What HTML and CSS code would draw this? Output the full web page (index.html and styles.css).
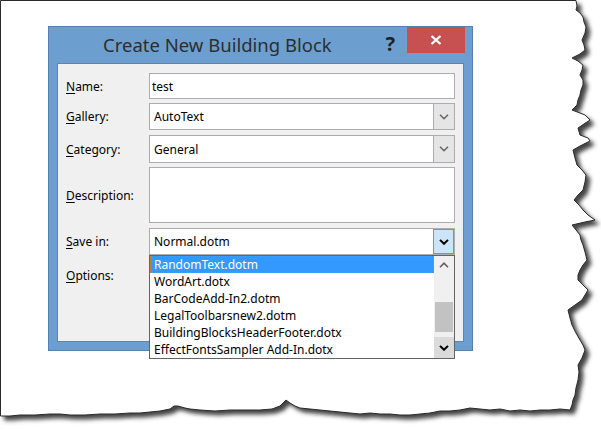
FILE: index.html
```html
<!DOCTYPE html>
<html>
<head>
<meta charset="utf-8">
<title>Create New Building Block</title>
<link rel="stylesheet" href="styles.css">
</head>
<body>
<div class="page">
  <svg class="paper" width="601" height="430" viewBox="0 0 601 430" aria-hidden="true">
    <defs>
      <filter id="tornShadow" x="-5%" y="-5%" width="115%" height="115%">
        <feGaussianBlur in="SourceAlpha" stdDeviation="2"/>
        <feOffset dx="4" dy="4" result="blur"/>
        <feFlood flood-color="#444444"/>
        <feComposite in2="blur" operator="in"/>
        <feMerge><feMergeNode/><feMergeNode in="SourceGraphic"/></feMerge>
      </filter>
    </defs>
    <path filter="url(#tornShadow)" fill="#ffffff" stroke="#2a2a2a" stroke-width="1"
      d="M0.5,0.5 H576 L577,6 L576,10 L580,13 L583,17 L584,22 L586,27 L585,33 L582,40 L584,45 L585,50 L580,54 L572,58 L578,61 L583,65 L582,70 L580,75 L583,80 L583,85 L581,90 L580,95 L578,100 L577,105 L572,110 L580,113 L585,115 L590,120 L584,124 L578,128 L580,135 L588,138 L590,141 L580,146 L573,150 L575,158 L577,165 L582,170 L586,175 L585,182 L583,190 L578,195 L574,200 L579,205 L583,210 L588,215 L595,220 L585,222 L572,225 L576,230 L580,235 L581,240 L583,245 L585,252 L587,260 L583,265 L580,270 L578,275 L578,280 L583,285 L588,290 L585,295 L582,300 L575,305 L568,310 L570,318 L572,325 L576,333 L580,340 L583,345 L585,350 L582,358 L578,365 L579,372 L578,380 L576,388 L575,395 L573,400 L572,405 L570,410 L560,409 L550,410 L540,410 L530,411 L520,410 L510,411 L500,409 L490,410 L480,409 L470,408 L460,410 L450,411 L440,411 L430,413 L420,414 L410,415 L400,415 L390,414 L380,414 L370,413 L360,414 L350,413 L340,412 L330,411 L320,410 L310,409 L300,408 L295,406 L290,403 L286,400 L283,403 L280,406 L272,409 L260,410 L245,410 L230,410 L215,411 L200,410 L190,409 L185,408 L178,406 L174,406 L170,409 L160,411 L150,412 L140,413 L130,413 L115,414 L100,414 L85,415 L70,415 L60,414 L50,414 L35,415 L20,415 L10,416 L0.5,416 Z"/>
  </svg>

  <div class="dialog">
    <div class="titlebar">
      <span class="title">Create New Building Block</span>
      <span class="help">?</span>
      <span class="close">
        <svg width="12" height="10" viewBox="0 0 12 10"><path d="M1.5 1 L10.5 9 M10.5 1 L1.5 9" stroke="#ffffff" stroke-width="2.3" fill="none"/></svg>
      </span>
    </div>

    <div class="panel">
      <div class="row row-name">
        <label class="lbl"><u>N</u>ame:</label>
        <div class="textbox">test</div>
      </div>

      <div class="row row-gallery">
        <label class="lbl"><u>G</u>allery:</label>
        <div class="combo">
          <span class="val">AutoText</span>
          <span class="btn">
            <svg width="10" height="6" viewBox="0 0 10 6"><polyline points="1,0.8 5,4.8 9,0.8" fill="none" stroke="#606060" stroke-width="1.4"/></svg>
          </span>
        </div>
      </div>

      <div class="row row-category">
        <label class="lbl"><u>C</u>ategory:</label>
        <div class="combo combo-tall">
          <span class="val">General</span>
          <span class="btn">
            <svg width="10" height="6" viewBox="0 0 10 6"><polyline points="1,0.8 5,4.8 9,0.8" fill="none" stroke="#606060" stroke-width="1.4"/></svg>
          </span>
        </div>
      </div>

      <div class="row row-desc">
        <label class="lbl"><u>D</u>escription:</label>
        <div class="textarea"></div>
      </div>

      <div class="row row-save">
        <label class="lbl"><u>S</u>ave in:</label>
        <div class="combo-wrap">
          <div class="combo">
            <span class="val">Normal.dotm</span>
            <span class="btn btn-active">
              <svg width="10" height="6" viewBox="0 0 10 6"><polyline points="1,0.9 5,4.8 9,0.9" fill="none" stroke="#000000" stroke-width="2"/></svg>
            </span>
          </div>
          <div class="list">
            <div class="items">
              <div class="item sel">RandomText.dotm</div>
              <div class="item">WordArt.dotx</div>
              <div class="item">BarCodeAdd-In2.dotm</div>
              <div class="item">LegalToolbarsnew2.dotm</div>
              <div class="item">BuildingBlocksHeaderFooter.dotx</div>
              <div class="item">EffectFontsSampler Add-In.dotx</div>
            </div>
            <div class="scrollbar">
              <div class="sb-arrow sb-up">
                <svg width="10" height="6" viewBox="0 0 10 6"><polyline points="1,5.2 5,1.2 9,5.2" fill="none" stroke="#606060" stroke-width="1.6"/></svg>
              </div>
              <div class="sb-track"><div class="sb-thumb"></div></div>
              <div class="sb-arrow sb-down">
                <svg width="10" height="6" viewBox="0 0 10 6"><polyline points="1,0.9 5,4.8 9,0.9" fill="none" stroke="#000000" stroke-width="2"/></svg>
              </div>
            </div>
          </div>
        </div>
      </div>

      <div class="row row-options">
        <label class="lbl"><u>O</u>ptions:</label>
        <div class="combo"><span class="val"></span><span class="btn"></span></div>
      </div>
    </div>
  </div>
</div>
</body>
</html>
```

FILE: styles.css
```css
* {
  box-sizing: border-box;
}

html,
body {
  margin: 0;
  padding: 0;
  background: #ffffff;
}

body {
  width: 601px;
  height: 430px;
  overflow: hidden;
  font-family: "Noto Sans", "Open Sans", sans-serif;
  font-size: 12px;
  color: #000000;
}

.page {
  position: relative;
  width: 601px;
  height: 430px;
  padding: 26px 0 0 48px;
}

.paper {
  position: absolute;
  left: 0;
  top: 0;
  z-index: 0;
}

/* dialog window */
.dialog {
  position: relative;
  z-index: 1;
  width: 425px;
  height: 325px;
  border: 1px solid #5680b0;
  background: #6c9fd0;
  padding: 0 8px 8px;
  display: flex;
  flex-direction: column;
}

.titlebar {
  height: 36px;
  margin: 0 -8px;
  display: flex;
  align-items: flex-start;
}

.title {
  padding-left: 54px;
  line-height: 36px;
  font-size: 18.5px;
  color: #2e2e2e;
  flex: 1;
  white-space: nowrap;
}

.help {
  font-size: 20px;
  font-weight: bold;
  color: #222222;
  line-height: 34px;
  margin-right: 12px;
}

.close {
  width: 58px;
  height: 26px;
  margin-right: 7px;
  background: #c75050;
  display: flex;
  align-items: center;
  justify-content: center;
}

.close svg {
  display: block;
}

.panel {
  flex: 1;
  background: #f0f0f0;
  border: 1px solid #6284aa;
  padding: 9px 8px 0 8px;
}

/* form rows */
.row {
  display: grid;
  grid-template-columns: 83px 306px;
  align-items: center;
}

.row-gallery { margin-top: 4px; }
.row-category { margin-top: 5px; }
.row-desc { margin-top: 4px; }
.row-save { margin-top: 5px; }
.row-options { margin-top: 7px; }

.lbl {
  white-space: nowrap;
}

.lbl u {
  text-decoration-thickness: 1px;
  text-underline-offset: 2px;
}

.textbox {
  height: 26px;
  border: 1px solid #abadb3;
  background: #ffffff;
  padding-left: 2px;
  display: flex;
  align-items: center;
}

.textarea {
  height: 56px;
  border: 1px solid #abadb3;
  background: #ffffff;
}

.combo {
  height: 27px;
  border: 1px solid #acacac;
  background: #ffffff;
  display: flex;
}

.combo-tall {
  height: 28px;
}

.combo .val {
  flex: 1;
  padding-left: 4px;
  display: flex;
  align-items: center;
}

.combo .btn {
  width: 21px;
  background: #e5e5e5;
  border-left: 1px solid #acacac;
  display: flex;
  align-items: center;
  justify-content: center;
}

.combo .btn svg,
.sb-arrow svg {
  display: block;
}

.combo .btn-active {
  background: #cce4f7;
  border: 1px solid #569de5;
}

.combo-wrap {
  position: relative;
}

/* dropped-down list (popup) */
.list {
  position: absolute;
  left: 0;
  top: 27px;
  width: 306px;
  border: 1px solid #646464;
  background: #ffffff;
  display: flex;
  z-index: 5;
}

.items {
  flex: 1;
  min-width: 0;
}

.item {
  height: 17px;
  line-height: 17px;
  padding-left: 4px;
  white-space: nowrap;
  overflow: hidden;
}

.item.sel {
  background: #3399ff;
  color: #ffffff;
  border: 1px dotted #d9801e;
  padding-left: 3px;
  line-height: 15px;
}

.scrollbar {
  width: 20px;
  background: #f0f0f0;
  display: flex;
  flex-direction: column;
}

.sb-arrow {
  display: flex;
  align-items: center;
  justify-content: center;
}

.sb-up {
  height: 17px;
}

.sb-down {
  height: 21px;
  background: #dadada;
}

.sb-track {
  flex: 1;
  padding: 0 1px;
}

.sb-thumb {
  margin-top: 29px;
  height: 30px;
  background: #c2c2c2;
}
```
